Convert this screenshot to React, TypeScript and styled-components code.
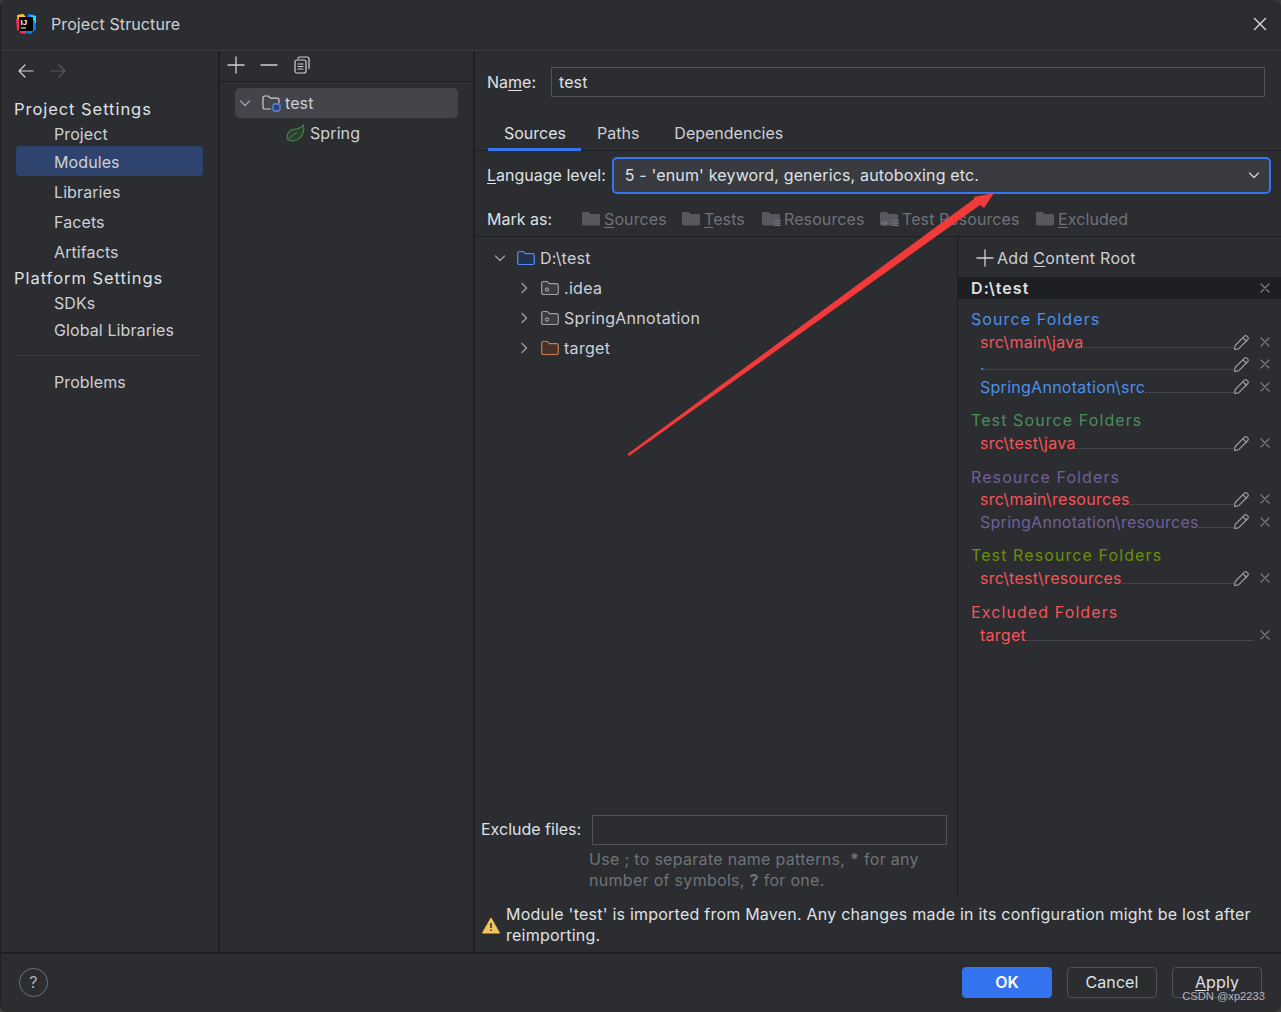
import React from "react";
import styled, { createGlobalStyle } from "styled-components";

const Global = createGlobalStyle`
  html, body { margin: 0; padding: 0; background: #3a3d38; }
  #root { width: 1281px; height: 1012px; }
  * { box-sizing: border-box; }
  u { text-underline-offset: 2px; text-decoration-thickness: 1px; }
`;

const Win = styled.div`
  position: relative;
  width: 1281px;
  height: 1012px;
  background: #2b2d30;
  border-radius: 8px;
  border-left: 1px solid #1e1f22;
  color: #dfe1e5;
  font-family: Inter, "Noto Sans", sans-serif;
  font-size: 16px;
  letter-spacing: 0.1px;
  display: flex;
  flex-direction: column;
  overflow: hidden;
`;
const TitleBar = styled.div`
  height: 51px;
  flex: none;
  display: flex;
  align-items: center;
  padding: 0 14px 3px 14px;
  gap: 14px;
  border-bottom: 1px solid #393b40;
`;
const Title = styled.div`
  flex: 1;
  font-size: 16px;
  letter-spacing: 0.1px;
  color: #cdd0d6;
`;
const Body = styled.div`
  flex: 1;
  min-height: 0;
  display: flex;
`;
const Sidebar = styled.div`
  width: 219px;
  flex: none;
  border-right: 2px solid #1e1f22;
  padding: 0 15px;
  display: flex;
  flex-direction: column;
`;
const NavRow = styled.div`
  height: 40px;
  margin-bottom: 5px;
  flex: none;
  display: flex;
  align-items: center;
  gap: 14px;
  padding-left: 1px;
`;
const SideHeader = styled.div<{ $h: number }>`
  height: ${(p) => p.$h}px;
  flex: none;
  display: flex;
  align-items: center;
  padding-top: 1px;
  margin-left: -2px;
  font-size: 16.5px;
  letter-spacing: 0.95px;
  color: #dfe1e5;
`;
const SideItem = styled.div<{ $h: number; $sel?: boolean }>`
  height: ${(p) => p.$h}px;
  flex: none;
  display: flex;
  align-items: center;
  padding: 1px 0 0 38px;
  border-radius: 4px;
  color: #ced0d6;
  background: ${(p) => (p.$sel ? "#2e436e" : "transparent")};
`;
const SideRule = styled.div`
  height: 1px;
  flex: none;
  margin: 13px 2px 12px 0;
  background: #393b40;
`;
const Middle = styled.div`
  width: 255px;
  flex: none;
  border-right: 2px solid #1e1f22;
  display: flex;
  flex-direction: column;
`;
const MiddleBar = styled.div`
  height: 31px;
  flex: none;
  border-bottom: 1px solid #1e1f22;
  display: flex;
  align-items: center;
  padding: 0 0 2px 7px;
  gap: 15px;
`;
const ModuleList = styled.div`
  padding: 6px 15px 0 15px;
  display: flex;
  flex-direction: column;
`;
const ModuleRow = styled.div<{ $sel?: boolean; $indent: number }>`
  height: 30px;
  display: flex;
  align-items: center;
  gap: 5px;
  padding-left: ${(p) => p.$indent}px;
  border-radius: 5px;
  background: ${(p) => (p.$sel ? "#43454a" : "transparent")};
  color: #ced0d6;
`;
const ModuleChevSlot = styled.span`
  width: 18px;
  flex: none;
  display: flex;
`;
const Main = styled.div`
  flex: 1;
  min-width: 0;
  display: flex;
  flex-direction: column;
`;
const NameRow = styled.div`
  height: 46px;
  flex: none;
  display: flex;
  align-items: center;
  padding: 16px 16px 0 12px;
  gap: 15px;
`;
const FieldLabel = styled.span`
  color: #dfe1e5;
  white-space: nowrap;
  letter-spacing: 0;
`;
const ExcludeLabel = styled(FieldLabel)`
  margin-bottom: 2px;
`;
const TextBox = styled.div<{ $w?: number }>`
  ${(p) => (p.$w ? `width: ${p.$w}px;` : "flex: 1;")}
  height: 30px;
  border: 1px solid #4e5157;
  display: flex;
  align-items: center;
  padding: 0 7px;
  color: #dfe1e5;
`;
const Tabs = styled.div`
  height: 54px;
  flex: none;
  display: flex;
  align-items: flex-end;
  padding-left: 13px;
  border-bottom: 1px solid #1e1f22;
`;
const Tab = styled.div<{ $on?: boolean; $pr: number }>`
  height: 33px;
  padding: 0 ${(p) => p.$pr}px 0 16px;
  display: flex;
  align-items: center;
  letter-spacing: 0;
  color: ${(p) => (p.$on ? "#dfe1e5" : "#ced0d6")};
  border-bottom: 3px solid ${(p) => (p.$on ? "#3574f0" : "transparent")};
  margin-bottom: -1px;
`;
const LangRow = styled.div`
  height: 48px;
  flex: none;
  display: flex;
  align-items: center;
  padding: 0 10px 0 12px;
  gap: 6px;
`;
const Combo = styled.div`
  flex: 1;
  height: 37px;
  border: 2.5px solid #3574f0;
  border-radius: 5px;
  background: #393b40;
  display: flex;
  align-items: center;
  justify-content: space-between;
  padding: 0 9px 0 11px;
  color: #dfe1e5;
  letter-spacing: 0.16px;
`;
const MarkRow = styled.div`
  height: 38px;
  flex: none;
  display: flex;
  align-items: center;
  padding: 3px 0 0 12px;
  border-bottom: 1px solid #1e1f22;
`;
const MarkLabel = styled.span`
  width: 95px;
  letter-spacing: 0;
`;
const MarkItem = styled.span<{ $w: number }>`
  width: ${(p) => p.$w}px;
  flex: none;
  display: flex;
  align-items: center;
  gap: 2px;
  color: #6f737a;
  letter-spacing: 0.1px;
  white-space: nowrap;
`;
const Split = styled.div`
  height: 660px;
  flex: none;
  display: flex;
`;
const TreePane = styled.div`
  width: 483px;
  flex: none;
  border-right: 1px solid #1e1f22;
  display: flex;
  flex-direction: column;
  padding: 6px 0 0 6px;
`;
const TreeRow = styled.div<{ $indent: number }>`
  height: 30px;
  flex: none;
  display: flex;
  align-items: center;
  gap: 5px;
  padding-left: ${(p) => p.$indent}px;
  color: #ced0d6;
  letter-spacing: 0.3px;
`;
const ChevSlot = styled.span`
  width: 18px;
  flex: none;
  display: flex;
`;
const Spacer = styled.div`
  flex: 1;
`;
const ExcludeRow = styled.div`
  display: flex;
  align-items: center;
  gap: 11px;
`;
const Hint = styled.div`
  margin: 4px 0 0 108px;
  color: #6f737a;
  line-height: 21px;
  width: 350px;
  letter-spacing: 0.3px;
  height: 48px;
  b { font-weight: 700; }
`;
const RootsPane = styled.div`
  flex: 1;
  display: flex;
  flex-direction: column;
  min-width: 0;
`;
const AddRoot = styled.div`
  height: 40px;
  flex: none;
  display: flex;
  align-items: center;
  gap: 3px;
  padding: 2px 0 0 18px;
  letter-spacing: 0.3px;
  color: #ced0d6;
`;
const RootHead = styled.div`
  height: 22px;
  flex: none;
  background: #1e1f22;
  display: flex;
  align-items: center;
  justify-content: space-between;
  padding: 0 10px 0 13px;
  font-weight: 600;
  letter-spacing: 1.1px;
  color: #dfe1e5;
`;
const Section = styled.div<{ $c: string; $mt: number; $mb?: number }>`
  margin-top: ${(p) => p.$mt}px;
  margin-bottom: ${(p) => p.$mb ?? 1}px;
  height: 22px;
  flex: none;
  padding-left: 13px;
  display: flex;
  align-items: center;
  color: ${(p) => p.$c};
  letter-spacing: 1.1px;
`;
const Folder = styled.div<{ $c: string; $h?: number }>`
  height: ${(p) => p.$h ?? 22}px;
  flex: none;
  display: flex;
  align-items: center;
  padding: 0 10px 0 22px;
  color: ${(p) => p.$c};
  white-space: nowrap;
  letter-spacing: 0.27px;
`;
const Dots = styled.span`
  flex: 1;
  align-self: flex-end;
  margin-bottom: 5px;
  border-bottom: 1px dotted #5a5d63;
`;
const FolderIcons = styled.span`
  display: flex;
  align-items: center;
  gap: 9px;
`;
const CloseOnly = styled.span`
  margin-left: 6px;
  display: flex;
`;
const Warn = styled.div`
  flex: 1;
  display: flex;
  align-items: center;
  gap: 6px;
  padding: 0 20px 0 7px;
  line-height: 21px;
  color: #dfe1e5;
  letter-spacing: 0.23px;
`;
const Footer = styled.div`
  height: 60px;
  flex: none;
  border-top: 2px solid #1e1f22;
  display: flex;
  align-items: center;
  padding: 0 19px 2px 18px;
  gap: 15px;
`;
const HelpBtn = styled.div`
  width: 29px;
  height: 29px;
  border: 1px solid #6f737a;
  border-radius: 50%;
  display: flex;
  align-items: center;
  justify-content: center;
  color: #b0b3b9;
  margin-right: auto;
`;
const Btn = styled.div<{ $primary?: boolean }>`
  width: 90px;
  height: 31px;
  border-radius: 4px;
  display: flex;
  align-items: center;
  justify-content: center;
  border: 1px solid ${(p) => (p.$primary ? "#3574f0" : "#4e5157")};
  background: ${(p) => (p.$primary ? "#3574f0" : "transparent")};
  color: ${(p) => (p.$primary ? "#ffffff" : "#dfe1e5")};
  font-weight: ${(p) => (p.$primary ? 600 : 400)};
`;
const Arrow = styled.svg`
  position: absolute;
  left: 0;
  top: 0;
  width: 1281px;
  height: 1012px;
  pointer-events: none;
`;
const Watermark = styled.div`
  position: absolute;
  right: 16px;
  bottom: 10px;
  font-family: "Liberation Sans", sans-serif;
  font-size: 11.2px;
  letter-spacing: 0;
  color: #b4b6ba;
`;

const Stroke = ({ w = 16, h = 16, c = "#ced0d6", sw = 1.2, vb = "0 0 16 16", children }: any) => (
  <svg width={w} height={h} viewBox={vb} fill="none" stroke={c} strokeWidth={sw} strokeLinecap="round" strokeLinejoin="round" style={{ flex: "none" }}>
    {children}
  </svg>
);
const X = () => (
  <Stroke w={12} h={12} vb="0 0 12 12" c="#7a7d83" sw={1.2}>
    <path d="M2 2l8 8M10 2l-8 8" />
  </Stroke>
);
const Pencil = () => (
  <Stroke w={17} h={17} vb="0 0 17 17" c="#9a9da3" sw={1.2}>
    <path d="M1.5 15.5l.7-4L11.5 2.2a1.6 1.6 0 0 1 2.3 0l1 1a1.6 1.6 0 0 1 0 2.3L5.5 14.8z" />
    <path d="M10 3.8l3.2 3.2" />
  </Stroke>
);
const ChevD = ({ c = "#9da0a8" }: { c?: string }) => (
  <Stroke w={12} h={12} vb="0 0 12 12" c={c} sw={1.3}><path d="M1.5 4l4.5 4.5L10.5 4" /></Stroke>
);
const ChevR = () => (
  <Stroke w={12} h={12} vb="0 0 12 12" c="#9da0a8" sw={1.3}><path d="M4 1.5L8.5 6 4 10.5" /></Stroke>
);
const FolderShape = ({ stroke, fill, dot }: { stroke: string; fill: string; dot?: boolean }) => (
  <svg width="18" height="16" viewBox="0 0 18 16" style={{ flex: "none" }}>
    <path d="M.7 3.2A1.7 1.7 0 0 1 2.4 1.5h3.900l2.200 2.200h7.100A1.700 1.700 0 0 1 17.300 5.400v7.400a1.700 1.700 0 0 1-1.700 1.700H2.400A1.700 1.700 0 0 1 .7 12.800z" fill={fill} stroke={stroke} strokeWidth="1.2" />
    {dot && <circle cx="6" cy="9.500" r="1.600" fill="none" stroke="#b4b8bf" strokeWidth="1" />}
  </svg>
);
const MarkFolder = ({ extra }: { extra?: "res" | "test" }) => (
  <svg width="20" height="18" viewBox="0 0 20 18" style={{ flex: "none" }}>
    <path d="M0 3.500A1.500 1.500 0 0 1 1.500 2h5l2 2h8A1.500 1.500 0 0 1 18 5.500V14a1.500 1.500 0 0 1-1.500 1.500h-15A1.500 1.500 0 0 1 0 14z" fill="#57595e" />
    {extra && <path d="M12 10.500h7M12 13h7M12 15.500h7" stroke="#6f737a" strokeWidth="1.200" />}
    {extra === "test" && <path d="M1 13l3-2.500V16zM8 13L5 10.500V16z" fill="#6f737a" />}
  </svg>
);
const Logo = () => (
  <svg width="22" height="22" viewBox="0 0 22 22" style={{ flex: "none" }}>
    <path d="M2 3l6-2 3 4-8 9z" fill="#ff8a2b" />
    <path d="M1 6l6 1-1 11-4-1z" fill="#fe2857" />
    <path d="M5 17l9 1-4 3-5-1z" fill="#fe2857" />
    <path d="M2 2l6-1 3 3-7 3z" fill="#f4c531" />
    <path d="M13 1l7 1 1 14-5 5-6-1z" fill="#087cfa" />
    <path d="M15 2l6 1v8z" fill="#21d7fb" />
    <rect x="4" y="4" width="14" height="14" fill="#000" />
    <text x="5.500" y="11.500" fontSize="8" fontWeight="700" fill="#fff" fontFamily="Liberation Sans, sans-serif">IJ</text>
    <rect x="6" y="14.500" width="5" height="1" fill="#fff" />
  </svg>
);
const Leaf = () => (
  <svg width="19" height="18" viewBox="0 0 19 18" style={{ flex: "none" }}>
    <path d="M17.500 1c.6 3.500.4 8.500-2.500 12-2.500 3-6.500 4.200-10 3.800C2.500 16.500 1 15 1 12.500 1 9 4 5.800 8 5.300c4-.5 7.500-1.300 9.500-4.300z" fill="#2c4230" stroke="#4a8350" strokeWidth="1.100" />
    <path d="M3 15c2-3 5-5 8-6" stroke="#4a8350" strokeWidth="1" fill="none" />
  </svg>
);

const edit = (
  <FolderIcons>
    <Pencil />
    <X />
  </FolderIcons>
);

const RED = "#f5545a";
const BLUE = "#4e90ea";
const PURPLE = "#725f99";

export default function App() {
  return (
    <Win>
      <Global />
      <TitleBar>
        <Logo />
        <Title>Project Structure</Title>
        <Stroke w={14} h={14} vb="0 0 14 14" c="#dfe1e5" sw={1.3}><path d="M1.500 1.500l11 11M12.500 1.500l-11 11" /></Stroke>
      </TitleBar>
      <Body>
        <Sidebar>
          <NavRow>
            <Stroke w={18} h={16} vb="0 0 18 16" c="#ced0d6" sw={1.2}><path d="M2 8h14M8 2L2 8l6 6" /></Stroke>
            <Stroke w={18} h={16} vb="0 0 18 16" c="#55585e" sw={1.2}><path d="M2 8h14M10 2l6 6-6 6" /></Stroke>
          </NavRow>
          <SideHeader $h={25}>Project Settings</SideHeader>
          <SideItem $h={25}>Project</SideItem>
          <SideItem $h={30} $sel>Modules</SideItem>
          <SideItem $h={30}>Libraries</SideItem>
          <SideItem $h={30}>Facets</SideItem>
          <SideItem $h={30}>Artifacts</SideItem>
          <SideHeader $h={22}>Platform Settings</SideHeader>
          <SideItem $h={28}>SDKs</SideItem>
          <SideItem $h={26}>Global Libraries</SideItem>
          <SideRule />
          <SideItem $h={26}>Problems</SideItem>
        </Sidebar>
        <Middle>
          <MiddleBar>
            <Stroke w={18} h={18} vb="0 0 18 18" c="#ced0d6" sw={1.3}><path d="M9 1v16M1 9h16" /></Stroke>
            <Stroke w={18} h={18} vb="0 0 18 18" c="#ced0d6" sw={1.3}><path d="M1 9h16" /></Stroke>
            <Stroke w={18} h={18} vb="0 0 18 18" c="#ced0d6" sw={1.2}>
              <rect x="2" y="4" width="11" height="13" rx="2" />
              <path d="M5 2.500A1.500 1.500 0 0 1 6.500 1H14a2 2 0 0 1 2 2v9.500" />
              <path d="M5 8h5M5 10.500h5M5 13h5" />
            </Stroke>
          </MiddleBar>
          <ModuleList>
            <ModuleRow $sel $indent={4}>
              <ModuleChevSlot><ChevD /></ModuleChevSlot>
              <svg width="19" height="18" viewBox="0 0 19 18" style={{ flex: "none", marginRight: -1 }}>
                <path d="M9 15H2.700A1.700 1.700 0 0 1 1 13.300V3.700A1.700 1.700 0 0 1 2.700 2h3.600l2.200 2.200h6.800A1.700 1.700 0 0 1 17 5.900V9" fill="none" stroke="#ced0d6" strokeWidth="1.200" />
                <rect x="11" y="10" width="7" height="7" rx="1.500" fill="#2e436e" stroke="#548af7" strokeWidth="1.300" />
              </svg>
              test
            </ModuleRow>
            <ModuleRow $indent={51}>
              <Leaf />
              <span>Spring</span>
            </ModuleRow>
          </ModuleList>
        </Middle>
        <Main>
          <NameRow>
            <FieldLabel>Na<u>m</u>e:</FieldLabel>
            <TextBox>test</TextBox>
          </NameRow>
          <Tabs>
            <Tab $on $pr={15}>Sources</Tab>
            <Tab $pr={19}>Paths</Tab>
            <Tab $pr={16}>Dependencies</Tab>
          </Tabs>
          <LangRow>
            <FieldLabel><u>L</u>anguage level:</FieldLabel>
            <Combo>
              5 - 'enum' keyword, generics, autoboxing etc.
              <ChevD c="#ced0d6" />
            </Combo>
          </LangRow>
          <MarkRow>
            <MarkLabel>Mark as:</MarkLabel>
            <MarkItem $w={100}><MarkFolder /><span><u>S</u>ources</span></MarkItem>
            <MarkItem $w={80}><MarkFolder /><span><u>T</u>ests</span></MarkItem>
            <MarkItem $w={118}><MarkFolder extra="res" /><span>Resources</span></MarkItem>
            <MarkItem $w={156}><MarkFolder extra="test" /><span>Test Resources</span></MarkItem>
            <MarkItem $w={100}><MarkFolder /><span><u>E</u>xcluded</span></MarkItem>
          </MarkRow>
          <Split>
            <TreePane>
              <TreeRow $indent={13}>
                <ChevSlot><ChevD /></ChevSlot>
                <FolderShape stroke="#548af7" fill="#25324d" />
                D:\test
              </TreeRow>
              <TreeRow $indent={37}>
                <ChevSlot><ChevR /></ChevSlot>
                <FolderShape stroke="#9da0a8" fill="#3a3c40" dot />
                .idea
              </TreeRow>
              <TreeRow $indent={37}>
                <ChevSlot><ChevR /></ChevSlot>
                <FolderShape stroke="#9da0a8" fill="#3a3c40" dot />
                SpringAnnotation
              </TreeRow>
              <TreeRow $indent={37}>
                <ChevSlot><ChevR /></ChevSlot>
                <FolderShape stroke="#c77d55" fill="#45322b" />
                target
              </TreeRow>
              <Spacer />
              <ExcludeRow>
                <ExcludeLabel>Exclude files:</ExcludeLabel>
                <TextBox $w={355} />
              </ExcludeRow>
              <Hint>
                Use ; to separate name patterns, <b>*</b> for any number of symbols, <b>?</b> for one.
              </Hint>
            </TreePane>
            <RootsPane>
              <AddRoot>
                <Stroke w={18} h={18} vb="0 0 18 18" c="#ced0d6" sw={1.3}><path d="M9 1v16M1 9h16" /></Stroke>
                <span>Add <u>C</u>ontent Root</span>
              </AddRoot>
              <RootHead>D:\test<X /></RootHead>
              <Section $c={BLUE} $mt={9}>Source Folders</Section>
              <Folder $c={RED}>src\main\java<Dots />{edit}</Folder>
              <Folder $c={BLUE}>.<Dots />{edit}</Folder>
              <Folder $c={BLUE} $h={23}>SpringAnnotation\src<Dots />{edit}</Folder>
              <Section $c="#4a8f5d" $mt={11}>Test Source Folders</Section>
              <Folder $c={RED}>src\test\java<Dots />{edit}</Folder>
              <Section $c={PURPLE} $mt={12} $mb={0}>Resource Folders</Section>
              <Folder $c={RED}>src\main\resources<Dots />{edit}</Folder>
              <Folder $c={PURPLE} $h={23}>SpringAnnotation\resources<Dots />{edit}</Folder>
              <Section $c="#6c8f0a" $mt={11}>Test Resource Folders</Section>
              <Folder $c={RED}>src\test\resources<Dots />{edit}</Folder>
              <Section $c={RED} $mt={12}>Excluded Folders</Section>
              <Folder $c={RED}>target<Dots /><CloseOnly><X /></CloseOnly></Folder>
            </RootsPane>
          </Split>
          <Warn>
            <svg width="18" height="17" viewBox="0 0 18 17" style={{ flex: "none", marginTop: 2 }}>
              <path d="M9 1L17.500 16H.5z" fill="#f2c55c" stroke="#f2c55c" strokeLinejoin="round" />
              <path d="M9 6v5M9 12.500v1.500" stroke="#2b2d30" strokeWidth="1.500" />
            </svg>
            <span>Module 'test' is imported from Maven. Any changes made in its configuration might be lost after reimporting.</span>
          </Warn>
        </Main>
      </Body>
      <Footer>
        <HelpBtn>?</HelpBtn>
        <Btn $primary>OK</Btn>
        <Btn>Cancel</Btn>
        <Btn><span><u>A</u>pply</span></Btn>
      </Footer>
      <Arrow viewBox="0 0 1281 1012">
        <path d="M626.500 454L973 199 973 197 993 193 983 208 979 205 628 456z" fill="#f33a3a" />
      </Arrow>
      <Watermark>CSDN @xp2233</Watermark>
    </Win>
  );
}
